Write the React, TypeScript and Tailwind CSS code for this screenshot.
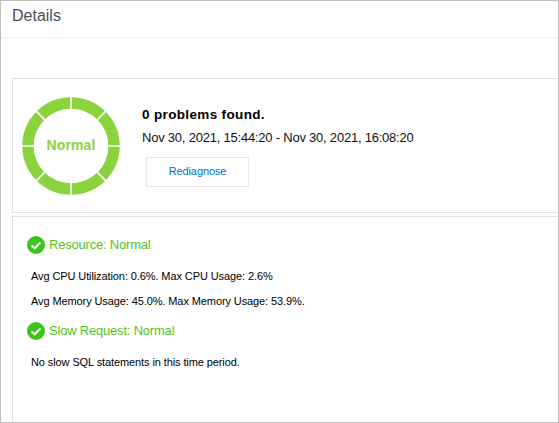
const font = { fontFamily: "'Liberation Sans', Arial, sans-serif" };

function Ring() {
  const lines = [0, 45, 90, 135];
  return (
    <div className="relative h-[98px] w-[98px] shrink-0">
      <svg width="98" height="98" viewBox="0 0 98 98">
        <circle cx="49" cy="49" r="43" fill="none" stroke="#8bd33c" strokeWidth="11.5" />
        {lines.map((a) => (
          <line
            key={a}
            x1="49"
            y1="-1"
            x2="49"
            y2="99"
            stroke="#fff"
            strokeWidth="1.6"
            transform={`rotate(${a} 49 49)`}
          />
        ))}
        <circle cx="49" cy="49" r="37.2" fill="#fff" />
      </svg>
      <span className="absolute inset-0 flex items-center justify-center text-[14px] tracking-[0.1px] font-bold text-[#8bd33c]">
        Normal
      </span>
    </div>
  );
}

function CheckIcon() {
  return (
    <svg width="18" height="18" viewBox="0 0 18 18" className="shrink-0">
      <circle cx="9" cy="9" r="9" fill="#3ec41f" />
      <path d="M4.6 9.4 7.7 12.3 13.4 6.4" fill="none" stroke="#fff" strokeWidth="2" />
    </svg>
  );
}

function SectionTitle({ text }: { text: string }) {
  return (
    <div className="flex items-center gap-[4px] h-[18px]">
      <CheckIcon />
      <span className="text-[13px] tracking-[-0.2px] text-[#52c41a]">{text}</span>
    </div>
  );
}

export default function App() {
  return (
    <div
      style={font}
      className="h-[423px] w-[559px] overflow-hidden border border-[#bfbfbf] bg-white"
    >
      <div className="h-[37px] border-b border-[#eeeeee] pl-[11px] pt-[5px] text-[16px] leading-[20px] text-[#44505c]">
        Details
      </div>
      <div className="pl-[11px] pt-[40px]">
        <div className="flex h-[135px] items-center border-y border-l border-[#e0e0e0] pl-[9px]">
          <Ring />
          <div className="ml-[22px] mt-[1px] flex flex-col">
            <div className="text-[13.5px] leading-[18px] font-bold tracking-[0.35px] text-black">0 problems found.</div>
            <div className="mt-[5px] text-[13px] leading-[18px] tracking-[-0.22px] text-[#111111]">
              Nov 30, 2021, 15:44:20 - Nov 30, 2021, 16:08:20
            </div>
            <button className="mt-[10px] ml-[4px] h-[30px] w-[103px] border border-[#e8e8e8] bg-white text-[11px] tracking-[-0.1px] text-[#0070cc]">
              Rediagnose
            </button>
          </div>
        </div>
        <div className="mt-[3px] h-[210px] border-t border-l border-[#e0e0e0] pl-[14px] pt-[19px]">
          <SectionTitle text="Resource: Normal" />
          <p className="mt-[15px] pl-[4px] text-[11px] leading-[14px] tracking-[-0.1px] text-black">
            Avg CPU Utilization: 0.6%. Max CPU Usage: 2.6%
          </p>
          <p className="mt-[11px] pl-[4px] text-[11px] leading-[14px] tracking-[-0.1px] text-black">
            Avg Memory Usage: 45.0%. Max Memory Usage: 53.9%.
          </p>
          <div className="mt-[14px]">
            <SectionTitle text="Slow Request: Normal" />
          </div>
          <p className="mt-[15px] pl-[4px] text-[11px] leading-[14px] tracking-[-0.1px] text-black">
            No slow SQL statements in this time period.
          </p>
        </div>
      </div>
    </div>
  );
}
